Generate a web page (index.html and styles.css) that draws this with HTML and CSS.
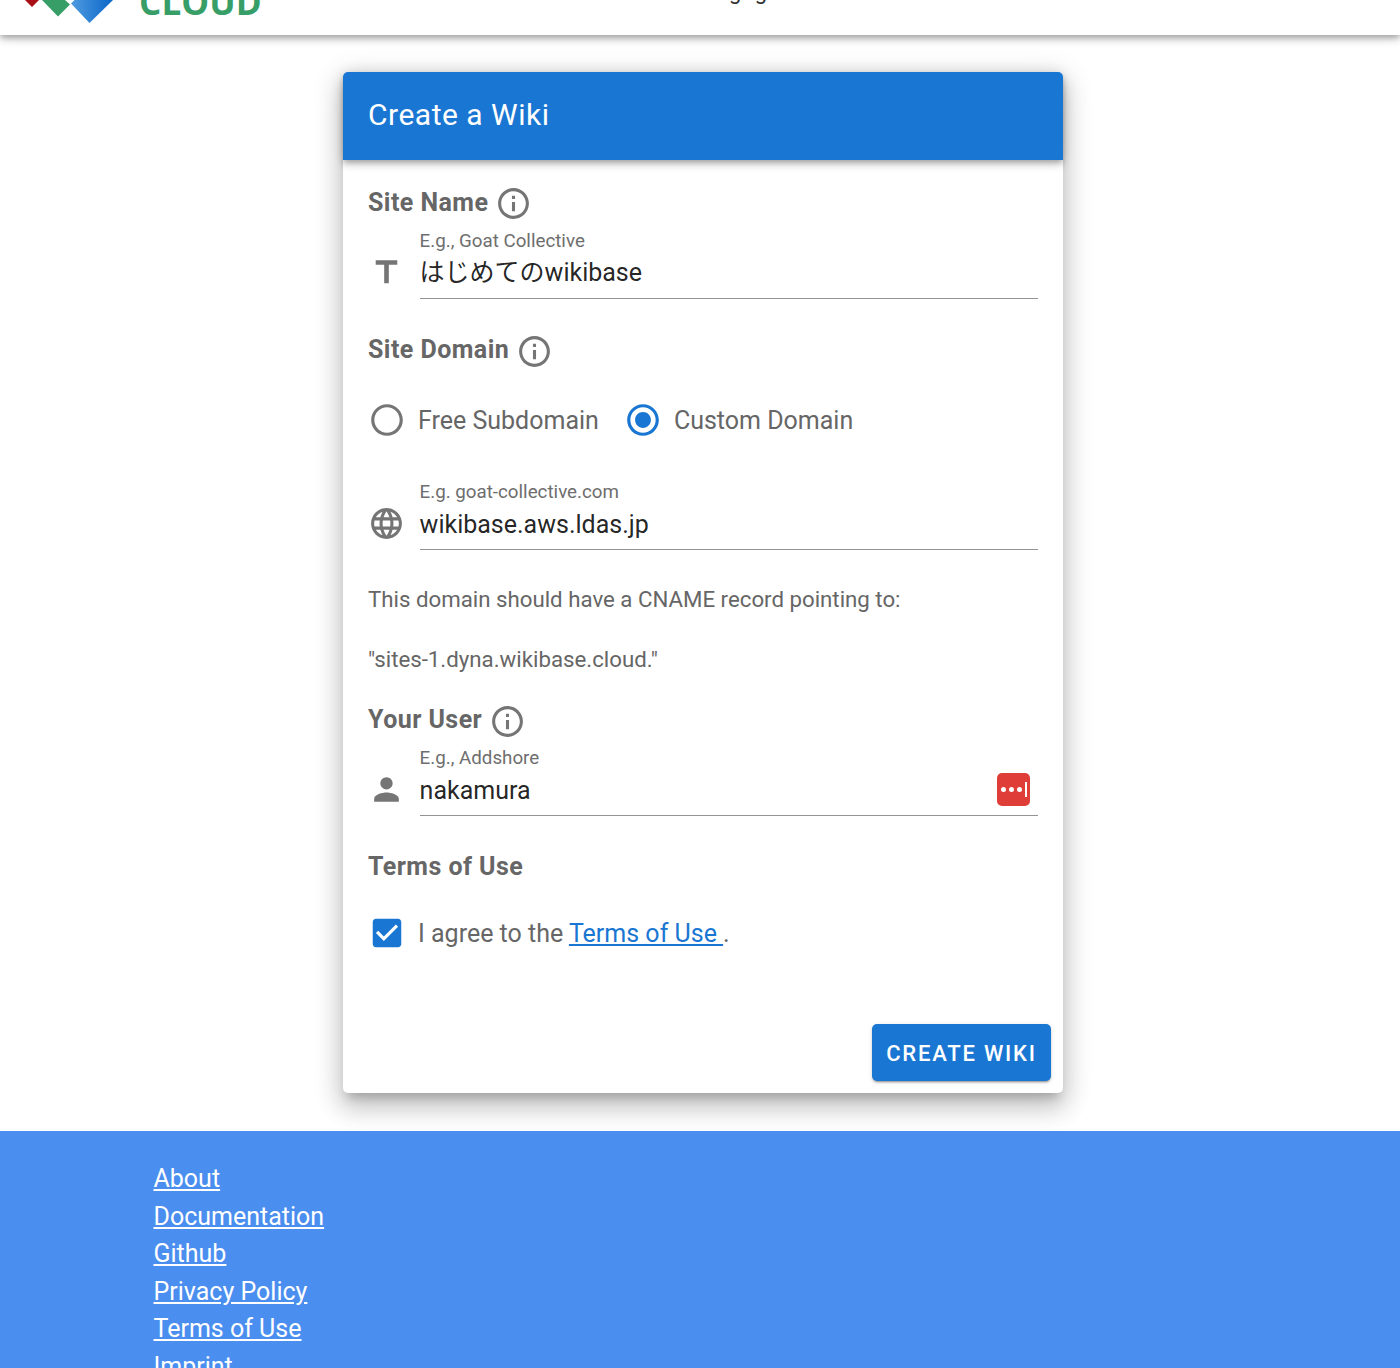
FILE: index.html
```html
<!DOCTYPE html>
<html lang="en">
<head>
<meta charset="utf-8">
<title>Create a Wiki</title>
<link rel="stylesheet" href="styles.css">
</head>
<body>
<div class="page">
  <header class="topbar">
    <div class="brand">
      <svg class="logo" width="114" height="35" viewBox="0 0 114 35" aria-hidden="true">
        <defs>
          <linearGradient id="blue" x1="0" x2="1" y1="0" y2="0"><stop offset="0" stop-color="#4f9be0"/><stop offset="1" stop-color="#0b66c8"/></linearGradient>
        </defs>
        <polygon points="25,0 39,0 32,7" fill="#a80f14"/>
        <polygon points="42,0 65,0 70,4.500 58,16.500" fill="#389e68"/>
        <polygon points="74.500,0 113,0 89.500,23 71,3.500" fill="url(#blue)"/>
      </svg>
      <span class="brand-name">CLOUD</span>
    </div>
    <span class="top-link">g g</span>
  </header>
  <main class="main">
    <section class="card">
      <div class="card-head">Create a Wiki</div>
      <form class="card-body">
        <div class="label-row">Site Name
          <svg class="info info-first" viewBox="0 0 24 24"><path d="M11 7h2v2h-2zm0 4h2v6h-2zm1-9C6.480 2 2 6.480 2 12s4.480 10 10 10 10-4.480 10-10S17.520 2 12 2zm0 18c-4.410 0-8-3.590-8-8s3.590-8 8-8 8 3.590 8 8-3.590 8-8 8z"/></svg>
        </div>
        <div class="field field-first">
          <svg class="field-icon" viewBox="0 0 24 24"><path d="M5 4v3h5.500v12h3V7H19V4z"/></svg>
          <div class="field-box">
            <span class="hint">E.g., Goat Collective</span>
            <span class="value value-cjk">はじめてのwikibase</span>
          </div>
        </div>
        <div class="label-row label-gap">Site Domain
          <svg class="info" viewBox="0 0 24 24"><path d="M11 7h2v2h-2zm0 4h2v6h-2zm1-9C6.480 2 2 6.480 2 12s4.480 10 10 10 10-4.480 10-10S17.520 2 12 2zm0 18c-4.410 0-8-3.590-8-8s3.590-8 8-8 8 3.590 8 8-3.590 8-8 8z"/></svg>
        </div>
        <div class="radios">
          <span class="choice">
            <svg class="control" viewBox="0 0 24 24"><path d="M12 2C6.480 2 2 6.480 2 12s4.480 10 10 10 10-4.480 10-10S17.520 2 12 2zm0 18c-4.420 0-8-3.580-8-8s3.580-8 8-8 8 3.580 8 8-3.580 8-8 8z"/></svg>
            Free Subdomain
          </span>
          <span class="choice">
            <svg class="control control-on" viewBox="0 0 24 24"><path d="M12 7c-2.760 0-5 2.240-5 5s2.240 5 5 5 5-2.240 5-5-2.240-5-5-5zm0-5C6.480 2 2 6.480 2 12s4.480 10 10 10 10-4.480 10-10S17.520 2 12 2zm0 18c-4.420 0-8-3.580-8-8s3.580-8 8-8 8 3.580 8 8-3.580 8-8 8z"/></svg>
            Custom Domain
          </span>
        </div>
        <div class="field field-domain">
          <svg class="field-icon" viewBox="0 0 24 24"><path d="M11.990 2C6.470 2 2 6.480 2 12s4.470 10 9.990 10C17.520 22 22 17.520 22 12S17.520 2 11.990 2zm6.930 6h-2.950c-.32-1.250-.78-2.450-1.380-3.560 1.840.63 3.370 1.910 4.330 3.560zM12 4.040c.83 1.200 1.480 2.530 1.910 3.960h-3.820c.43-1.430 1.080-2.760 1.910-3.960zM4.260 14C4.100 13.360 4 12.690 4 12s.1-1.360.26-2h3.380c-.08.660-.14 1.320-.14 2 0 .68.060 1.340.14 2H4.260zm.82 2h2.950c.32 1.250.78 2.450 1.380 3.560-1.840-.63-3.370-1.900-4.330-3.560zm2.950-8H5.080c.96-1.660 2.490-2.930 4.330-3.560C8.810 5.550 8.350 6.750 8.030 8zM12 19.960c-.83-1.200-1.480-2.530-1.910-3.960h3.820c-.43 1.430-1.080 2.760-1.910 3.960zM14.340 14H9.660c-.09-.66-.16-1.320-.16-2 0-.68.070-1.350.16-2h4.680c.09.650.16 1.320.16 2 0 .68-.07 1.340-.16 2zm.25 5.560c.6-1.110 1.060-2.310 1.380-3.560h2.950c-.96 1.650-2.490 2.930-4.330 3.560zM16.360 14c.08-.66.140-1.320.14-2 0-.68-.06-1.340-.14-2h3.380c.16.640.26 1.310.26 2s-.1 1.360-.26 2h-3.380z"/></svg>
          <div class="field-box">
            <span class="hint">E.g. goat-collective.com</span>
            <span class="value">wikibase.aws.ldas.jp</span>
          </div>
        </div>
        <p class="note note-first">This domain should have a CNAME record pointing to:</p>
        <p class="note note-next">"sites-1.dyna.wikibase.cloud."</p>
        <div class="label-row label-user">Your User
          <svg class="info" viewBox="0 0 24 24"><path d="M11 7h2v2h-2zm0 4h2v6h-2zm1-9C6.480 2 2 6.480 2 12s4.480 10 10 10 10-4.480 10-10S17.520 2 12 2zm0 18c-4.410 0-8-3.590-8-8s3.590-8 8-8 8 3.590 8 8-3.590 8-8 8z"/></svg>
        </div>
        <div class="field field-first">
          <svg class="field-icon" viewBox="0 0 24 24"><path d="M12 12c2.210 0 4-1.790 4-4s-1.790-4-4-4-4 1.790-4 4 1.790 4 4 4zm0 2c-2.670 0-8 1.340-8 4v2h16v-2c0-2.660-5.330-4-8-4z"/></svg>
          <div class="field-box">
            <span class="hint">E.g., Addshore</span>
            <span class="value">nakamura</span>
            <span class="lastpass">
              <i class="dot"></i><i class="dot"></i><i class="dot"></i><i class="bar"></i>
            </span>
          </div>
        </div>
        <div class="label-row label-gap">Terms of Use</div>
        <div class="agree">
          <svg class="control control-on" viewBox="0 0 24 24"><path d="M19 3H5c-1.110 0-2 .9-2 2v14c0 1.100.89 2 2 2h14c1.110 0 2-.9 2-2V5c0-1.100-.89-2-2-2zm-9 14l-5-5 1.410-1.410L10 14.170l7.590-7.590L19 8l-9 9z"/></svg>
          <span class="agree-text">I agree to the <a class="agree-link" href="#">Terms of Use </a>.</span>
        </div>
        <div class="actions"><button class="create" type="button">Create Wiki</button></div>
      </form>
    </section>
  </main>
  <footer class="footer">
    <a href="#">About</a>
    <a href="#">Documentation</a>
    <a href="#">Github</a>
    <a href="#">Privacy Policy</a>
    <a href="#">Terms of Use</a>
    <a href="#">Imprint</a>
  </footer>
</div>
</body>
</html>
```
FILE: styles.css
```css
* { box-sizing: border-box; }
html, body { margin: 0; height: 1368px; overflow: hidden; background: #fff; }
body { font-family: Roboto, "Noto Sans CJK JP", sans-serif; color: rgba(0,0,0,.6); }
.page { height: 1368px; overflow: hidden; display: flex; flex-direction: column; }

.topbar {
  position: relative; z-index: 2; flex: none; height: 35px; background: #fff;
  box-shadow: 0 3px 5px -1px rgba(0,0,0,.2), 0 5px 7px rgba(0,0,0,.14), 0 1px 14px rgba(0,0,0,.12);
}
.brand { position: absolute; left: 0; top: 0; display: flex; height: 35px; overflow: hidden; }
.logo { display: block; flex: none; }
.brand-name {
  margin: -18px 0 0 25px; font: 700 35px/40px "Open Sans", sans-serif; color: #389e68; letter-spacing: .1px;
}
.top-link {
  position: absolute; left: 729px; top: 0; color: #333;
  font-size: 22px; line-height: 26px; letter-spacing: 4px; transform: translateY(-21px);
}

.main { flex: none; padding: 37px 0 38px 343px; }
.card {
  width: 720px; height: 1021px; background: #fff; border-radius: 5px; display: flex; flex-direction: column;
  box-shadow: 0 9px 10px -5px rgba(0,0,0,.2), 0 15px 24px 2px rgba(0,0,0,.14), 0 6px 28px 5px rgba(0,0,0,.12);
}
.card-head {
  flex: none; height: 88px; padding: 0 25px 3px; display: flex; align-items: center; background: #1976d2; color: #fff;
  font-size: 30px; letter-spacing: .5px; border-radius: 5px 5px 0 0;
  box-shadow: 0 3px 5px -1px rgba(0,0,0,.2), 0 5px 7px rgba(0,0,0,.14), 0 1px 14px rgba(0,0,0,.12);
}
.card-body { flex: 1; padding: 27px 25px 0; display: flex; flex-direction: column; position: relative; }

.label-row { height: 30px; display: flex; align-items: center; gap: 10px; font-size: 25px; font-weight: 700; letter-spacing: .45px; color: #666; }
.label-gap { margin-top: 35px; }
.label-user { margin-top: 30px; }
.info { width: 37px; height: 37px; margin: 4px 0 0 -3px; fill: #757575; flex: none; }
.info-first { margin-top: 2px; }

.field { display: flex; height: 69px; }
.field-first { margin-top: 13px; }
.field-domain { margin-top: 45px; }
.field-icon { width: 37px; height: 37px; margin-top: 24px; fill: #757575; flex: none; }
.field-box {
  flex: 1; margin-left: 14.600px; padding-top: 1px; border-bottom: 1.500px solid #949494; position: relative; display: flex; flex-direction: column;
}
.hint { height: 20px; font-size: 18.750px; line-height: 20px; color: #6e6e6e; }
.value { margin-top: 9px; font-size: 25px; line-height: 28px; color: rgba(0,0,0,.87); }
.value-cjk { margin-top: 8px; }
.lastpass {
  position: absolute; right: 8px; top: 26px; width: 33px; height: 33px; border-radius: 5px; background: #de3e37;
  display: flex; align-items: center; justify-content: center; gap: 3px;
}
.dot { width: 5px; height: 5px; border-radius: 50%; background: #fff; }
.bar { width: 2px; height: 15px; background: #fff; }

.radios { display: flex; height: 32px; margin-top: 40px; gap: 25px; }
.choice, .agree { display: flex; align-items: center; font-size: 25px; color: #666; }
.control { width: 38px; height: 38px; margin: 0 12px 0 0; fill: #757575; flex: none; }
.control-on { fill: #1976d2; }

.note { margin: 0; height: 30px; font-size: 22.250px; line-height: 30px; color: #666; }
.note-first { margin-top: 34px; }
.note-next { margin-top: 30px; }

.agree { height: 32px; margin-top: 36px; }
.agree-text { padding-top: 1px; }
.agree-link { color: #1976d2; }

.actions { margin: auto -13px 12px 0; display: flex; justify-content: flex-end; }
.create {
  width: 179px; height: 57px; border: 0; border-radius: 5px; background: #1976d2; color: #fff; padding: 1px 0 0;
  font: 500 22px Roboto, sans-serif; letter-spacing: 1.800px; text-transform: uppercase;
  box-shadow: 0 3px 1px -2px rgba(0,0,0,.2), 0 2px 2px rgba(0,0,0,.14), 0 1px 5px rgba(0,0,0,.12);
}

.footer { flex: 1; background: #4a8eef; padding: 29px 0 0 153.500px; display: flex; flex-direction: column; align-items: flex-start; }
.footer a { color: #fff; font-size: 25px; line-height: 37.500px; }
```
